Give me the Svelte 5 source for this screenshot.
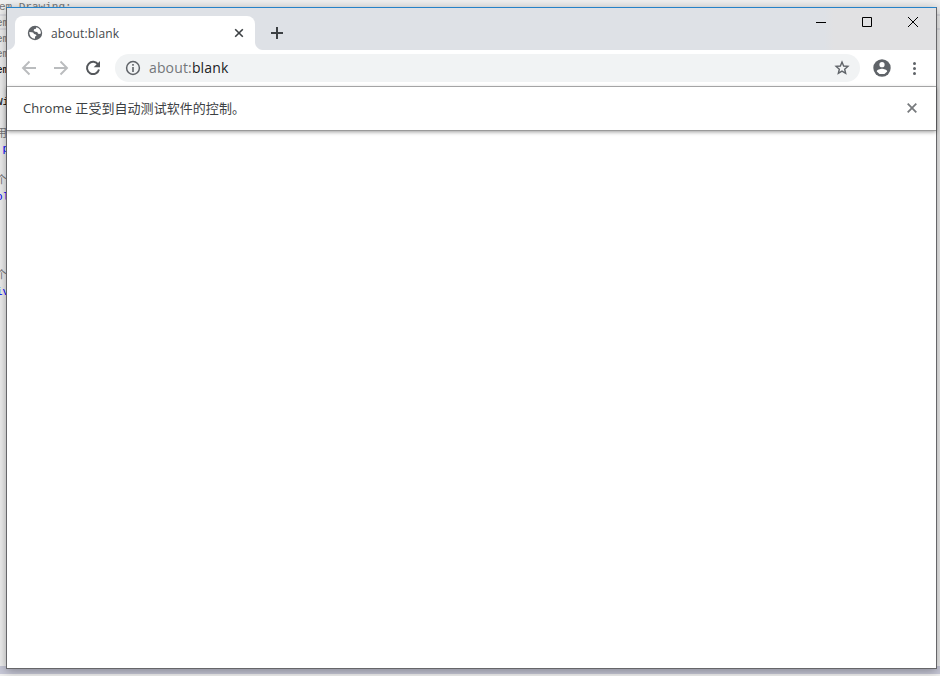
<script>
    const codeLines = [
        { text: "em.Drawing;", kind: "dim" },
        { text: "em.", kind: "dim" },
        { text: "em.", kind: "dim" },
        { text: "em.", kind: "dim" },
        { text: "em.", kind: "plain" },
        { text: "" },
        { text: "Wi", kind: "plain" },
        { text: "" },
        { text: "用", kind: "dim" },
        { text: " p", kind: "keyword" },
        { text: "" },
        { text: "个", kind: "dim" },
        { text: "ol", kind: "keyword" },
        { text: "" },
        { text: "" },
        { text: "" },
        { text: "" },
        { text: "个", kind: "dim" },
        { text: "iv", kind: "keyword" },
    ];

    let title = "about:blank";
    let showInfobar = true;
</script>

<div class="desktop">
    <div class="editor">
        {#each codeLines as line}
            <div class="line {line.kind || ''}">{line.text}</div>
        {/each}
    </div>
    <div class="current-line"></div>
    <div class="statusbar"></div>

    <div class="window">
        <div class="tabstrip">
            <div class="tab">
                <svg class="globe" width="16" height="16" viewBox="0 0 16 16">
                    <circle cx="8" cy="8" r="7.2" fill="#5f6368" />
                    <path d="M2.3 7.1 5 7.200q1.700.2 2 1.900l1.800.3q.9.500.5 1.500l-1.300.6v2.300A6 6 0 0 1 2.300 7.100Z" fill="#fff" />
                    <path d="M9.300 2.200 8.900 3.700 7 4.200l-.3 1.500 1.400 1.100 2.100.2.900 1.800 2.200.2.600-1.300A6 6 0 0 0 9.300 2.200Z" fill="#fff" />
                </svg>
                <span class="tab-title">{title}</span>
                <svg class="tab-close" width="10" height="10" viewBox="0 0 10 10">
                    <path d="M1.2 1.2 8.8 8.8M8.8 1.2 1.2 8.8" stroke="#3c4043" stroke-width="1.6" />
                </svg>
            </div>
            <svg class="new-tab" width="12" height="12" viewBox="0 0 12 12">
                <path d="M6 0v12M0 6h12" stroke="#3c4043" stroke-width="2" />
            </svg>
            <div class="caption-buttons">
                <svg width="46" height="28" viewBox="0 0 46 28">
                    <path d="M18 14.5h10" stroke="#000" />
                </svg>
                <svg width="46" height="28" viewBox="0 0 46 28">
                    <path d="M18.5 9.5h9v9h-9z" fill="none" stroke="#000" />
                </svg>
                <svg width="46" height="28" viewBox="0 0 46 28">
                    <path d="m18 9 10 10M28 9 18 19" stroke="#000" stroke-width="1" />
                </svg>
            </div>
        </div>

        <div class="toolbar">
            <svg class="nav" width="16" height="16" viewBox="0 0 16 16">
                <path d="M15 8H2M8.5 1.5 2 8l6.5 6.5" fill="none" stroke="#babcbe" stroke-width="1.9" />
            </svg>
            <svg class="nav" width="16" height="16" viewBox="0 0 16 16">
                <path d="M1 8h13M7.5 1.5 14 8l-6.5 6.5" fill="none" stroke="#babcbe" stroke-width="1.9" />
            </svg>
            <svg class="nav" width="16" height="16" viewBox="0 0 16 16">
                <path d="M13.2 4.6A6.1 6.1 0 1 0 14 9.5" fill="none" stroke="#54575b" stroke-width="2" />
                <path d="M15 1v6.3H8.7z" fill="#54575b" />
            </svg>
            <div class="omnibox">
                <svg width="16" height="16" viewBox="0 0 16 16">
                    <circle cx="8" cy="8" r="6.4" fill="none" stroke="#5f6368" stroke-width="1.5" />
                    <path d="M8 4v1.7M8 7v5" stroke="#5f6368" stroke-width="1.6" />
                </svg>
                <span class="url"><span class="scheme">about:</span>blank</span>
                <svg class="star" width="16" height="16" viewBox="0 0 16 16">
                    <path d="m8 2.1 1.65 3.95 4.25.36-3.23 2.8.98 4.17L8 11.15l-3.65 2.23.98-4.17L2.1 6.41l4.25-.36z" fill="none" stroke="#5f6368" stroke-width="1.4" />
                </svg>
            </div>
            <svg class="profile" width="18" height="18" viewBox="0 0 18 18">
                <circle cx="9" cy="9" r="8.7" fill="#5f6368" />
                <circle cx="9" cy="5.7" r="2.6" fill="#fff" />
                <path d="M3.8 12.4C3.9 10.7 7.3 9.8 9 9.8s5.1.9 5.2 2.6A6.2 6.2 0 0 1 9 15.1a6.2 6.2 0 0 1-5.2-2.7z" fill="#fff" />
            </svg>
            <svg class="menu" width="4" height="14" viewBox="0 0 4 14">
                <circle cx="2.5" cy="2.5" r="1.5" fill="#5f6368" />
                <circle cx="2.5" cy="7.5" r="1.5" fill="#5f6368" />
                <circle cx="2.5" cy="12.5" r="1.5" fill="#5f6368" />
            </svg>
        </div>

        {#if showInfobar}
            <div class="infobar">
                <span class="message">Chrome <span class="cjk">正受到自动测试软件的控制。</span></span>
                <svg width="10" height="10" viewBox="0 0 10 10">
                    <path d="M.7.7 9.3 9.3M9.3.7.7 9.3" stroke="#777a7d" stroke-width="1.8" />
                </svg>
            </div>
        {/if}
        <div class="page"></div>
    </div>
</div>

<style>
    .desktop {
        position: relative;
        width: 940px;
        height: 676px;
        overflow: hidden;
        background: #f0f0f0;
        font-family: "Open Sans", "Noto Sans CJK SC", sans-serif;
    }

    .editor {
        height: 100%;
        margin-left: -1px;
        font-family: "Liberation Mono", "Noto Sans CJK SC", monospace;
        font-size: 11px;
    }

    .line {
        height: 15.82px;
        line-height: 14px;
        white-space: pre;
        color: #000;
    }

    .line + .line {
        margin-left: -3px;
    }

    .line.dim {
        color: #777;
    }

    .line.keyword {
        color: #0000ff;
    }

    .current-line {
        position: absolute;
        top: 14px;
        left: 0;
        right: 0;
        height: 12px;
        border: 2px solid #dedee3;
        border-width: 2px 0;
    }

    .statusbar {
        position: absolute;
        left: 0;
        right: 0;
        bottom: 2px;
        height: 8px;
        background: #c8c9d8;
    }

    .window {
        position: absolute;
        top: 7px;
        left: 6px;
        box-sizing: border-box;
        width: 931px;
        height: 662px;
        display: flex;
        flex-direction: column;
        border: 1px solid #666669;
        border-top-color: #2582c8;
        background: #fff;
        box-shadow: 0 2px 10px rgba(0, 0, 0, 0.35);
    }

    .tabstrip {
        display: flex;
        height: 42px;
        background: linear-gradient(90deg, #dee1e6 88%, #e1e1e3 89%);
    }

    .tab {
        position: relative;
        box-sizing: border-box;
        display: flex;
        align-items: center;
        width: 240px;
        height: 34px;
        margin: 8px 0 0 8px;
        padding: 0 11px 0 12px;
        border-radius: 8px 8px 0 0;
        background: #fff;
    }

    .tab::before,
    .tab::after {
        content: "";
        position: absolute;
        bottom: 0;
        width: 8px;
        height: 8px;
    }

    .tab::before {
        left: -8px;
        background: radial-gradient(circle at 0 0, transparent 7.5px, #fff 8.5px);
    }

    .tab::after {
        right: -8px;
        background: radial-gradient(circle at 100% 0, transparent 7.5px, #fff 8.5px);
    }

    .tab-title {
        flex: 1;
        margin-left: 8px;
        padding-top: 2px;
        font-size: 12px;
        line-height: 16px;
        letter-spacing: 0.13px;
        color: #45494d;
    }

    .new-tab {
        margin: 19px 0 0 16px;
    }

    .caption-buttons {
        display: flex;
        height: 28px;
        margin-left: auto;
    }

    .toolbar {
        display: flex;
        align-items: center;
        box-sizing: border-box;
        height: 37px;
        padding: 0 20px 0 14px;
        border-bottom: 1px solid #b5b6b7;
    }

    .nav {
        margin-right: 16px;
    }

    .omnibox {
        display: flex;
        align-items: center;
        box-sizing: border-box;
        width: 745px;
        height: 28px;
        margin-left: -2px;
        padding: 0 10px;
        border-radius: 14px;
        background: #f1f3f4;
    }

    .url {
        flex: 1;
        margin-left: 8px;
        font-size: 14px;
        line-height: 20px;
        letter-spacing: 0.14px;
        color: #202124;
    }

    .scheme {
        color: #74777b;
    }

    .profile {
        margin-left: 13px;
    }

    .menu {
        margin-left: auto;
        overflow: visible;
    }

    .infobar {
        z-index: 1;
        display: flex;
        align-items: center;
        justify-content: space-between;
        box-sizing: border-box;
        height: 44px;
        padding: 0 19px 2px 16px;
        border-bottom: 1px solid #999;
        background: #fff;
        box-shadow: 0 1px 4px rgba(0, 0, 0, 0.4);
    }

    .message {
        font-size: 13px;
        line-height: 20px;
        letter-spacing: 0.05px;
        color: #3c4043;
    }

    .page {
        flex: 1;
        background: #fff;
    }
</style>
